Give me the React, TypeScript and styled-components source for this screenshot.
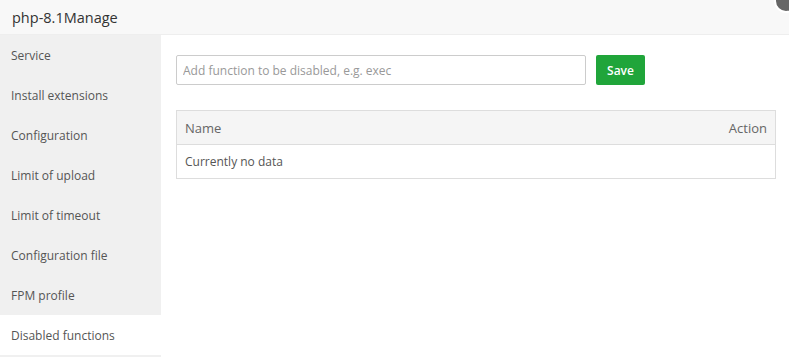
import React from "react";
import styled, { createGlobalStyle } from "styled-components";

const Global = createGlobalStyle`
  html, body { margin: 0; padding: 0; background: #fff; }
  body { font-family: "Open Sans", "Noto Sans", "Liberation Sans", sans-serif; color: #333; }
  * { box-sizing: border-box; }
`;

const Layer = styled.div`
  position: relative;
  width: 789px;
  height: 357px;
  overflow: hidden;
  background: #fff;
  display: flex;
  flex-direction: column;
`;

const TitleBar = styled.div`
  height: 35px;
  flex: none;
  background: #f8f8f8;
  border-bottom: 1px solid #eee;
  padding: 0 12px;
  display: flex;
  align-items: center;
  font-size: 14.5px;
  color: #333;
`;

const CloseDot = styled.div`
  position: absolute;
  right: -9px;
  top: -11px;
  width: 24px;
  height: 24px;
  border-radius: 50%;
  background: #666;
  border: 2px solid #fff;
`;

const Body = styled.div`
  flex: 1;
  display: flex;
  min-height: 0;
`;

const Side = styled.div`
  width: 161px;
  flex: none;
  background: #f0f0f0;
  display: flex;
  flex-direction: column;
`;

const SideItem = styled.div<{ $active?: boolean }>`
  height: 40px;
  flex: none;
  display: flex;
  align-items: center;
  padding-left: 11px;
  font-size: 12px;
  color: #555;
  background: ${(p) => (p.$active ? "#fff" : "transparent")};
`;

const Main = styled.div`
  flex: 1;
  padding: 20px 13px 0 15px;
  display: flex;
  flex-direction: column;
`;

const Toolbar = styled.div`
  display: flex;
  align-items: center;
  gap: 10px;
`;

const Input = styled.input`
  width: 410px;
  height: 30px;
  border: 1px solid #ccc;
  border-radius: 2px;
  padding: 0 6px;
  font-family: inherit;
  font-size: 12px;
  color: #555;
  outline: none;
  &::placeholder { color: #999; }
`;

const SaveBtn = styled.button`
  width: 49px;
  height: 30px;
  border: none;
  border-radius: 2px;
  background: #20a53a;
  color: #fff;
  font-family: inherit;
  font-size: 12px;
  font-weight: 600;
  padding: 0;
`;

const Table = styled.div`
  margin-top: 25px;
  width: 600px;
  border: 1px solid #ddd;
`;

const Row = styled.div<{ $head?: boolean }>`
  height: ${(p) => (p.$head ? "34px" : "33px")};
  display: flex;
  align-items: center;
  justify-content: space-between;
  padding: 0 8px;
  font-size: ${(p) => (p.$head ? "13px" : "12px")};
  color: ${(p) => (p.$head ? "#666" : "#555")};
  background: ${(p) => (p.$head ? "#f5f5f5" : "#fff")};
  border-bottom: ${(p) => (p.$head ? "1px solid #ddd" : "none")};
`;

const items = [
  "Service",
  "Install extensions",
  "Configuration",
  "Limit of upload",
  "Limit of timeout",
  "Configuration file",
  "FPM profile",
  "Disabled functions",
];

export default function App() {
  return (
    <Layer>
      <Global />
      <TitleBar>php-8.1Manage</TitleBar>
      <CloseDot />
      <Body>
        <Side>
          {items.map((t) => (
            <SideItem key={t} $active={t === "Disabled functions"}>
              {t}
            </SideItem>
          ))}
          <SideItem />
        </Side>
        <Main>
          <Toolbar>
            <Input placeholder="Add function to be disabled, e.g. exec" />
            <SaveBtn>Save</SaveBtn>
          </Toolbar>
          <Table>
            <Row $head>
              <span>Name</span>
              <span>Action</span>
            </Row>
            <Row>
              <span>Currently no data</span>
            </Row>
          </Table>
        </Main>
      </Body>
    </Layer>
  );
}
